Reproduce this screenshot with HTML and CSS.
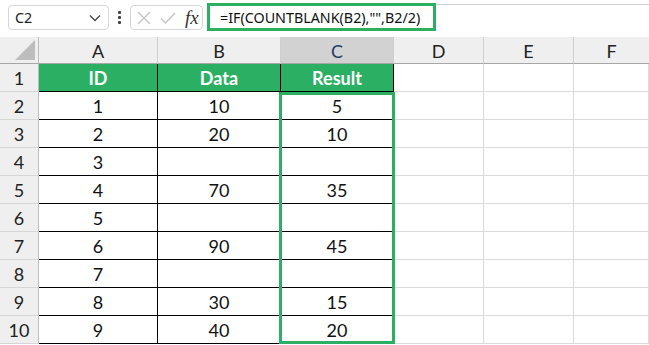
FILE: index.html
```html
<!DOCTYPE html>
<html>
<head>
<meta charset="utf-8">
<link rel="stylesheet" href="styles.css">
</head>
<body>
<div class="app">
  <div class="topbar">
    <div class="namebox">
      <span class="name">C2</span>
      <svg class="chev" width="12" height="8" viewBox="0 0 12 8"><path d="M1 1.5 L6 6.5 L11 1.5" fill="none" stroke="#444" stroke-width="1.3"/></svg>
    </div>
    <div class="dots"><span></span><span></span><span></span></div>
    <div class="fxbox">
      <svg width="16" height="16" viewBox="0 0 16 16"><path d="M2 2 L14 14 M14 2 L2 14" stroke="#c4c4c4" stroke-width="1.4" fill="none"/></svg>
      <svg width="18" height="16" viewBox="0 0 18 16"><path d="M2 8.5 L6.5 13 L16 3" stroke="#c4c4c4" stroke-width="1.4" fill="none"/></svg>
      <span class="fx">fx</span>
    </div>
    <div class="formula">=IF(COUNTBLANK(B2),"",B2/2)</div>
    <div class="formula-rest"></div>
  </div>
  <div class="sheet">
    <div class="grid">
      <div class="corner"><span class="tri"></span></div>
      <div class="ch">A</div>
      <div class="ch">B</div>
      <div class="ch sel">C</div>
      <div class="ch">D</div>
      <div class="ch">E</div>
      <div class="ch last">F</div>

      <div class="rh">1</div>
      <div class="c hd">ID</div><div class="c hd">Data</div><div class="c hd">Result</div>
      <div class="e"></div><div class="e"></div><div class="e"></div>

      <div class="rh">2</div>
      <div class="c">1</div><div class="c">10</div><div class="c">5</div>
      <div class="e"></div><div class="e"></div><div class="e"></div>

      <div class="rh">3</div>
      <div class="c">2</div><div class="c">20</div><div class="c">10</div>
      <div class="e"></div><div class="e"></div><div class="e"></div>

      <div class="rh">4</div>
      <div class="c">3</div><div class="c"></div><div class="c"></div>
      <div class="e"></div><div class="e"></div><div class="e"></div>

      <div class="rh">5</div>
      <div class="c">4</div><div class="c">70</div><div class="c">35</div>
      <div class="e"></div><div class="e"></div><div class="e"></div>

      <div class="rh">6</div>
      <div class="c">5</div><div class="c"></div><div class="c"></div>
      <div class="e"></div><div class="e"></div><div class="e"></div>

      <div class="rh">7</div>
      <div class="c">6</div><div class="c">90</div><div class="c">45</div>
      <div class="e"></div><div class="e"></div><div class="e"></div>

      <div class="rh">8</div>
      <div class="c">7</div><div class="c"></div><div class="c"></div>
      <div class="e"></div><div class="e"></div><div class="e"></div>

      <div class="rh">9</div>
      <div class="c">8</div><div class="c">30</div><div class="c">15</div>
      <div class="e"></div><div class="e"></div><div class="e"></div>

      <div class="rh">10</div>
      <div class="c">9</div><div class="c">40</div><div class="c">20</div>
      <div class="e"></div><div class="e"></div><div class="e"></div>
    </div>
    <div class="selection"></div>
  </div>
</div>
</body>
</html>
```
FILE: styles.css
```css
html, body {
  margin: 0;
  padding: 0;
  background: #ffffff;
}
.app {
  width: 649px;
  height: 345px;
  overflow: hidden;
  font-family: Lato, "Open Sans", sans-serif;
}
.topbar {
  height: 37px;
  display: flex;
  align-items: flex-start;
  padding-top: 5px;
  box-sizing: border-box;
  font-family: "Noto Sans", "Open Sans", sans-serif;
  font-size: 14.3px;
  color: #222;
}
.namebox {
  margin-left: 8px;
  width: 101px;
  height: 25px;
  box-sizing: border-box;
  border: 1px solid #d6d6d6;
  border-radius: 4px;
  display: flex;
  align-items: center;
  justify-content: space-between;
  padding: 0 7px 0 6px;
}
.dots {
  width: 21px;
  height: 25px;
  display: flex;
  flex-direction: column;
  align-items: center;
  justify-content: center;
  gap: 2px;
}
.dots span {
  width: 3px;
  height: 3px;
  background: #444;
  border-radius: 1px;
}
.fxbox {
  width: 73px;
  height: 25px;
  box-sizing: border-box;
  border: 1px solid #d6d6d6;
  border-radius: 4px;
  display: flex;
  align-items: center;
  padding-left: 5px;
  gap: 7px;
}
.fx {
  font-family: "Liberation Serif", serif;
  font-style: italic;
  font-size: 19px;
  color: #333;
  margin-left: 1px;
}
.formula {
  margin-left: 4px;
  margin-top: -2px;
  width: 229px;
  height: 28px;
  box-sizing: border-box;
  border: 3px solid #2bb063;
  display: flex;
  align-items: center;
  padding-left: 10px;
  color: #111;
}
.formula-rest {
  flex: 1;
  margin-top: -1px;
  border-top: 1px solid #d0d0d0;
  height: 24px;
}
.sheet {
  position: relative;
}
.grid {
  display: grid;
  grid-template-columns: 39px 119px 123px 113px 90px 90px 75px;
  grid-template-rows: 27px repeat(10, 28px);
  font-size: 18px;
  color: #111;
}
.grid > div {
  box-sizing: border-box;
  display: flex;
  align-items: center;
  justify-content: center;
}
.corner {
  background: #efefef;
  border-right: 1px solid #bdbdbd;
  border-bottom: 1px solid #a6a6a6;
  position: relative;
}
.tri {
  position: absolute;
  right: 3px;
  bottom: 3px;
  width: 0;
  height: 0;
  border-left: 20px solid transparent;
  border-bottom: 20px solid #bdbdbd;
}
.ch {
  background: #efefef;
  border-right: 1px solid #cfcfcf;
  border-bottom: 1px solid #a6a6a6;
  color: #222;
  padding-top: 2px;
}
.ch.sel {
  background: #d2d2d2;
  color: #1f3e5e;
}
.ch.last {
  border-right: none;
}
.rh {
  background: #efefef;
  border-right: 1px solid #bdbdbd;
  border-bottom: 1px solid #d6d6d6;
  color: #222;
}
.c {
  border-right: 1px solid #000;
  border-bottom: 1px solid #000;
  background: #fff;
}
.c.hd {
  background: #2bb063;
  color: #fff;
  font-weight: bold;
}
.e {
  border-right: 1px solid #dadada;
  border-bottom: 1px solid #dadada;
}
.selection {
  position: absolute;
  left: 279px;
  top: 55px;
  width: 116px;
  height: 252px;
  box-sizing: border-box;
  border: 3px solid #2bb063;
  pointer-events: none;
}
```
